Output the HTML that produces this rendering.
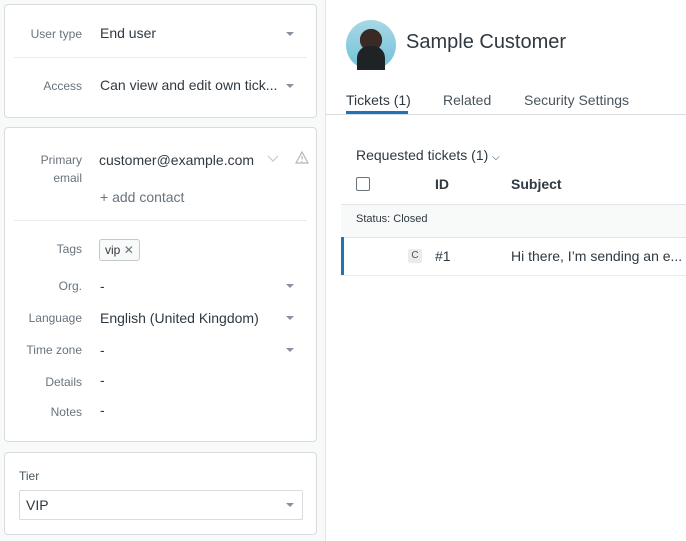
<!DOCTYPE html>
<html><head><style>
body{margin:0;width:686px;height:541px;overflow:hidden;background:#fff;font-family:"Liberation Sans",sans-serif;color:#2f3941;position:relative}
.a{position:absolute}
.left{left:0;top:0;width:325px;height:541px;background:#f8f9f9;border-right:1px solid #e2e4e6}
.card{position:absolute;left:4px;width:311px;background:#fff;border:1px solid #d8dcde;border-radius:4px}
.lbl{position:absolute;right:0;width:82px;text-align:right;font-size:12px;color:#68737d}
.val{position:absolute;left:100px;font-size:14px;color:#2f3941;white-space:nowrap}
.tri{position:absolute;left:286px;width:0;height:0;border-left:4px solid transparent;border-right:4px solid transparent;border-top:4px solid #87929d}
.hr{position:absolute;left:14px;width:293px;height:1px;background:#e9ebed}
</style></head><body>
<div class="a left"></div>
<div class="card" style="top:4px;height:112px"></div>
<div class="card" style="top:127px;height:313px"></div>
<div class="card" style="top:452px;height:81px"></div>

<div class="lbl" style="left:0;top:27px">User type</div><div class="val" style="top:25px">End user</div><div class="tri" style="top:32px"></div>
<div class="hr" style="top:57px"></div>
<div class="lbl" style="left:0;top:79px">Access</div><div class="val" style="top:77px">Can view and edit own tick...</div><div class="tri" style="top:84px"></div>

<div class="lbl" style="left:0;top:151px;line-height:18px">Primary<br>email</div>
<div class="val" style="top:152px;left:99px">customer@example.com</div>
<svg class="a" style="left:267px;top:155px" width="12" height="8"><path d="M1 1l5 5 5-5" fill="none" stroke="#c2c8cc" stroke-width="1.2"/></svg>
<svg class="a" style="left:295px;top:151px" width="14" height="13"><path d="M7 1L1 12h12z" fill="none" stroke="#b0b8be" stroke-width="1.2"/><path d="M7 5v3.5M7 10v1" stroke="#b0b8be" stroke-width="1.2"/></svg>
<div class="val" style="top:189px;color:#68737d">+ add contact</div>
<div class="hr" style="top:220px"></div>
<div class="lbl" style="left:0;top:242px">Tags</div>
<div class="a" style="left:99px;top:239px;height:20px;padding:0 5px;border:1px solid #c2c8cc;border-radius:3px;background:#f8f9f9;font-size:12px;line-height:20px">vip <span style="color:#68737d">✕</span></div>
<div class="lbl" style="left:0;top:279px">Org.</div><div class="val" style="top:278px">-</div><div class="tri" style="top:284px"></div>
<div class="lbl" style="left:0;top:311px">Language</div><div class="val" style="top:310px">English (United Kingdom)</div><div class="tri" style="top:316px"></div>
<div class="lbl" style="left:0;top:343px">Time zone</div><div class="val" style="top:342px">-</div><div class="tri" style="top:348px"></div>
<div class="lbl" style="left:0;top:375px">Details</div><div class="val" style="top:372px">-</div>
<div class="lbl" style="left:0;top:405px">Notes</div><div class="val" style="top:402px">-</div>

<div class="a" style="left:19px;top:469px;font-size:12px;color:#49545c">Tier</div>
<div class="a" style="left:19px;top:490px;width:282px;height:28px;border:1px solid #d8dcde;border-radius:2px;background:#fff"></div>
<div class="val" style="left:26px;top:497px">VIP</div><div class="tri" style="top:503px"></div>

<div class="a" style="left:346px;top:20px;width:50px;height:50px;border-radius:50%;background:radial-gradient(circle at 50% 40%,#3a2a25 0 28%,transparent 29%),linear-gradient(#a9d8e6,#6fc0d8)"></div>
<div class="a" style="left:357px;top:46px;width:28px;height:24px;border-radius:12px 12px 0 0;background:#1f2326"></div>
<div class="a" style="left:406px;top:31px;font-size:20px;color:#2f3941">Sample Customer</div>
<div class="a" style="left:346px;top:92px;font-size:14px;color:#2f3941">Tickets (1)</div>
<div class="a" style="left:346px;top:111px;width:62px;height:3px;background:#1f73b7"></div>
<div class="a" style="left:443px;top:92px;font-size:14px;color:#49545c">Related</div>
<div class="a" style="left:524px;top:92px;font-size:14px;color:#49545c">Security Settings</div>
<div class="a" style="left:326px;top:114px;width:360px;height:1px;background:#d8dcde"></div>
<div class="a" style="left:356px;top:147px;font-size:14px;color:#2f3941">Requested tickets (1) <span style="font-size:10px">⌵</span></div>
<div class="a" style="left:356px;top:177px;width:12px;height:12px;border:1px solid #68737d;border-radius:2px"></div>
<div class="a" style="left:435px;top:176px;font-size:14px;font-weight:bold;color:#2f3941">ID</div>
<div class="a" style="left:511px;top:176px;font-size:14px;font-weight:bold;color:#2f3941">Subject</div>
<div class="a" style="left:341px;top:204px;width:345px;height:32px;background:#f8f9f9;border-top:1px solid #e2e4e6;border-bottom:1px solid #e2e4e6"></div>
<div class="a" style="left:356px;top:213px;font-size:11px;color:#2f3941">Status: Closed</div>
<div class="a" style="left:341px;top:237px;width:3px;height:38px;background:#1f73b7"></div>
<div class="a" style="left:341px;top:275px;width:345px;height:1px;background:#e9ebed"></div>
<div class="a" style="left:408px;top:249px;width:14px;height:14px;background:#e9ebed;border-radius:2px;font-size:10px;text-align:center;line-height:14px;color:#49545c">C</div>
<div class="a" style="left:435px;top:248px;font-size:14px">#1</div>
<div class="a" style="left:511px;top:248px;font-size:14px">Hi there, I’m sending an e...</div>
</body></html>
